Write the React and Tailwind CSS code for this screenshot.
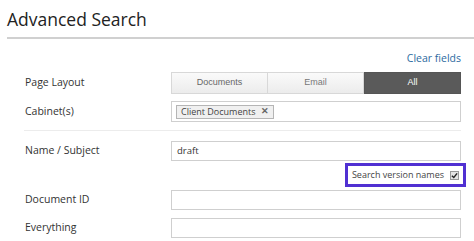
import React from 'react';

const font = { fontFamily: '"Open Sans", "Liberation Sans", sans-serif' };

const Row = ({ label, children, className = '' }) => (
    <div className={`flex items-center ${className}`}>
        <div className="w-[146px] text-[10.5px] text-[#333]">{label}</div>
        <div className="flex-1">{children}</div>
    </div>
);

const Input = ({ value = '' }) => (
    <div className="h-[20px] border border-[#cfcfcf] bg-white flex items-center px-[5px] text-[9.5px] text-[#333]">
        {value}
    </div>
);

export default function App() {
    return (
        <div className="w-[474px] h-[241px] bg-white overflow-hidden" style={font}>
            {/* Header */}
            <div className="pl-[7px] pt-[6px]">
                <h1 className="text-[17.5px] leading-[26px] text-[#222] h-[30px]">Advanced Search</h1>
                <div className="h-[2px] bg-[#d0d0d0] mt-[1px]" />
            </div>

            <div className="pl-[25px] pr-[13px]">
                <div className="flex justify-end mt-[10px] h-[18px]">
                    <a className="text-[10.5px] leading-[18px] text-[#2c6aa0]">Clear fields</a>
                </div>

                {/* Page layout */}
                <Row label="Page Layout" className="mt-[5px]">
                    <div className="flex h-[22px] text-[9px]" style={{ fontFamily: '"Liberation Sans", Arial, sans-serif' }}>
                        <div className="flex-1 flex items-center justify-center border border-[#d8d8d8] bg-gradient-to-b from-[#fafafa] to-[#ececec] text-[#666]">Documents</div>
                        <div className="flex-1 flex items-center justify-center border border-l-0 border-[#d8d8d8] bg-gradient-to-b from-[#fafafa] to-[#ececec] text-[#777]">Email</div>
                        <div className="flex-1 flex items-center justify-center border border-[#555] bg-[#5a5a5a] text-white">All</div>
                    </div>
                </Row>

                {/* Cabinets */}
                <Row label="Cabinet(s)" className="mt-[7px]">
                    <div className="h-[21px] border border-[#cfcfcf] bg-white flex items-center px-[4px]">
                        <span className="h-[14px] flex items-center gap-[5px] border border-[#b5b5b5] bg-[#f0f0f0] px-[4px] text-[9px] text-[#444] whitespace-nowrap">
                            Client Documents <span className="text-[8.5px] font-bold text-[#666]">✕</span>
                        </span>
                    </div>
                </Row>

                <div className="h-px bg-[#ececec] mt-[8px] -ml-px" />

                <Row label="Name / Subject" className="mt-[10px]">
                    <Input value="draft" />
                </Row>

                <div className="flex justify-end -mr-[5px] mt-[2px]">
                    <div className="h-[24px] w-[121px] border-[3px] border-[#5030d2] flex items-center justify-end pr-[4px] gap-[6px]">
                        <span className="text-[9px] text-[#444] whitespace-nowrap">Search version names</span>
                        <span className="w-[9px] h-[9px] border border-[#999] bg-[#e4e4e4] flex items-center justify-center">
                            <svg width="7" height="7" viewBox="0 0 8 8">
                                <path d="M1 4.2 L3.2 6.3 L7 1.5" fill="none" stroke="#222" strokeWidth="1.6" />
                            </svg>
                        </span>
                    </div>
                </div>

                <Row label="Document ID" className="mt-[3px]">
                    <Input />
                </Row>
                <Row label="Everything" className="mt-[8px]">
                    <Input />
                </Row>
            </div>
        </div>
    );
}
